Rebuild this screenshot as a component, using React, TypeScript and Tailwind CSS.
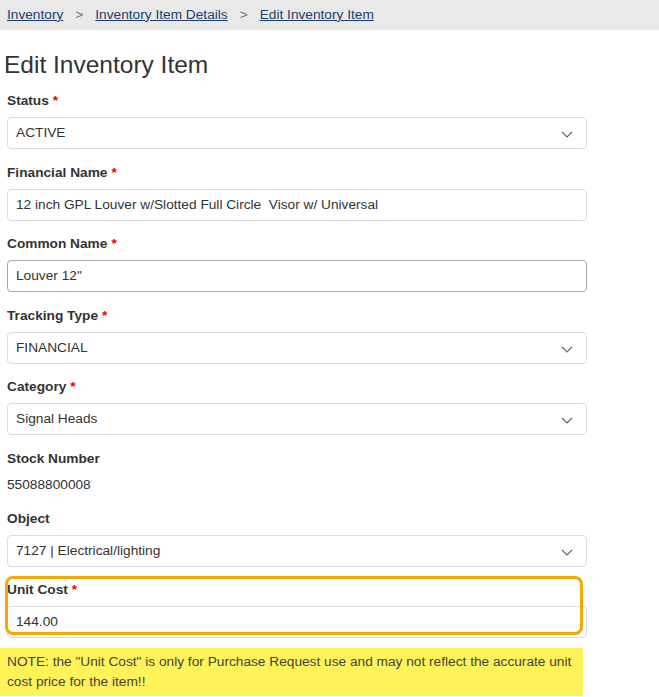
import React from "react";

const font = { fontFamily: '"Liberation Sans", Arial, sans-serif' };

function Chevron() {
  return (
    <svg width="12" height="7" viewBox="0 0 12 7" className="absolute right-[13px] top-[13px]">
      <path d="M1 1 L6 6 L11 1" fill="none" stroke="#666" strokeWidth="1.2" />
    </svg>
  );
}

function Label({ text, req }: { text: string; req?: boolean }) {
  return (
    <div className="h-5 leading-5 text-[13.7px] font-bold text-[#333] mb-[6px]">
      {text}
      {req && <span className="text-[#e00] ml-1">*</span>}
    </div>
  );
}

function Select({ value }: { value: string }) {
  return (
    <div className="relative h-8 w-[580px] border border-[#dcdcdc] rounded bg-white pl-2 leading-[30px] text-[13.7px] text-[#333]">
      {value}
      <Chevron />
    </div>
  );
}

function Input({ value, dark }: { value: string; dark?: boolean }) {
  return (
    <div
      className={`h-8 w-[580px] border rounded bg-white pl-2 leading-[30px] text-[13.7px] text-[#333] whitespace-pre ${
        dark ? "border-[#a9a9a9]" : "border-[#dcdcdc]"
      }`}
    >
      {value}
    </div>
  );
}

export default function App() {
  return (
    <div className="w-[659px] h-[697px] overflow-hidden bg-white" style={font}>
      <div className="h-[30px] bg-[#e9e9e9] flex items-center pl-[7px] text-[13.7px] text-[#1d3d6e]">
        <span className="underline">Inventory</span>
        <span className="text-[#777] mx-[12px]">&gt;</span>
        <span className="underline">Inventory Item Details</span>
        <span className="text-[#777] mx-[12px]">&gt;</span>
        <span className="underline">Edit Inventory Item</span>
      </div>
      <h1 className="h-[61px] pt-[20px] leading-[30px] pl-1 text-[24.5px] font-normal text-[#333]">Edit Inventory Item</h1>
      <div className="pl-[7px]">
        <div className="mb-[13.5px]">
          <Label text="Status" req />
          <Select value="ACTIVE" />
        </div>
        <div className="mb-[13.5px]">
          <Label text="Financial Name" req />
          <Input value="12 inch GPL Louver w/Slotted Full Circle  Visor w/ Universal" />
        </div>
        <div className="mb-[13.5px]">
          <Label text="Common Name" req />
          <Input value='Louver 12"' dark />
        </div>
        <div className="mb-[13.5px]">
          <Label text="Tracking Type" req />
          <Select value="FINANCIAL" />
        </div>
        <div className="mb-[13.5px]">
          <Label text="Category" req />
          <Select value="Signal Heads" />
        </div>
        <div className="mb-[14px]">
          <Label text="Stock Number" />
          <div className="h-5 leading-5 text-[13.7px] text-[#333]">55088800008</div>
        </div>
        <div className="mb-[13px]">
          <Label text="Object" />
          <Select value="7127 | Electrical/lighting" />
        </div>
        <div className="relative mb-[10px] w-[580px]">
          <Label text="Unit Cost" req />
          <Input value="144.00" />
          <div className="absolute left-[-2px] top-[-4px] w-[578px] h-[59px] border-[3px] border-[#f5a800] rounded-[8px] pointer-events-none" />
        </div>
      </div>
      <div className="w-[583px] bg-[#fff35a] px-[7px] py-[4px] text-[13.7px] leading-[20px] text-[#444]">
        NOTE: the "Unit Cost" is only for Purchase Request use and may not reflect the accurate unit cost price for the item!!
      </div>
    </div>
  );
}
